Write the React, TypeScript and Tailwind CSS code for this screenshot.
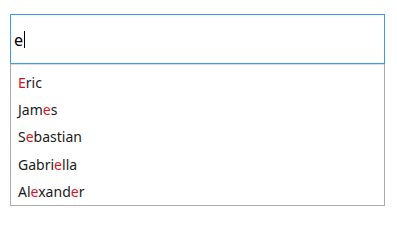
import React from "react";

const names = ["Eric", "James", "Sebastian", "Gabriella", "Alexander"];

const Highlight: React.FC<{ text: string; query: string }> = ({ text, query }) => {
  // color every matching letter red, like the reference
  return (
    <>
      {text.split("").map((ch, i) =>
        ch.toLowerCase() === query ? (
          <span key={i} className="text-[#e0121f]">
            {ch}
          </span>
        ) : (
          <span key={i}>{ch}</span>
        )
      )}
    </>
  );
};

const App: React.FC = () => {
  const query = "e";

  return (
    <div
      className="w-[397px] h-[218px] bg-white pl-[10px] pt-[14px]"
      style={{ fontFamily: '"Noto Sans", "Open Sans", sans-serif' }}
    >
      <div className="w-[375px]">
        <div className="h-[50px] border border-[#3d9ee0] flex items-center pl-[3px] pt-[1px] text-[16px] text-black">
          <span>{query}</span>
          <span className="inline-block w-px h-[17px] bg-black ml-[1px]" />
        </div>
        <ul className="border border-t-0 border-[#ababab] pt-[5px] pb-0 shadow-[inset_0_1px_1px_rgba(0,0,0,0.15)]">
          {names.map((name) => (
            <li key={name} className="h-[27.2px] leading-[27px] px-[7px] text-[14px] text-[#1a1a1a]">
              <Highlight text={name} query={query} />
            </li>
          ))}
        </ul>
      </div>
    </div>
  );
};

export default App;
